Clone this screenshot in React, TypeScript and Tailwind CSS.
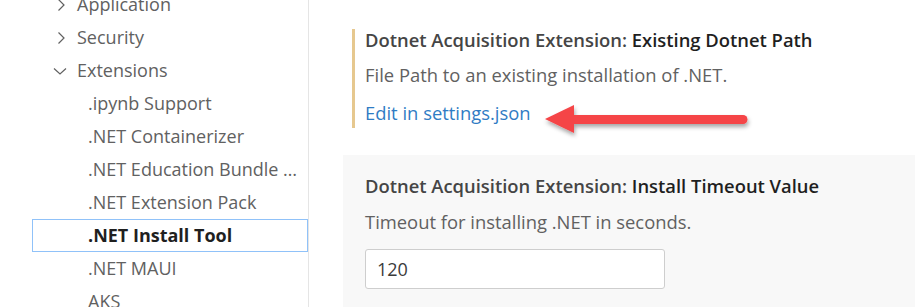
import React from "react";

const font = { fontFamily: '"Open Sans", "Noto Sans", sans-serif' };

function ChevronRight() {
  return (
    <svg width="12" height="14" viewBox="0 0 12 14" className="shrink-0">
      <path d="M3.5 1.5 L9 7 L3.5 12.5" fill="none" stroke="#616161" strokeWidth="1.2" />
    </svg>
  );
}

function ChevronDown() {
  return (
    <svg width="14" height="12" viewBox="0 0 14 12" className="shrink-0">
      <path d="M1 3.5 L7 9 L13 3.5" fill="none" stroke="#616161" strokeWidth="1.2" />
    </svg>
  );
}

type Item = { label: string; kind: "closed" | "open" | "child"; selected?: boolean };

const items: Item[] = [
  { label: "Application", kind: "closed" },
  { label: "Security", kind: "closed" },
  { label: "Extensions", kind: "open" },
  { label: ".ipynb Support", kind: "child" },
  { label: ".NET Containerizer", kind: "child" },
  { label: ".NET Education Bundle SDK Installer", kind: "child" },
  { label: ".NET Extension Pack", kind: "child" },
  { label: ".NET Install Tool", kind: "child", selected: true },
  { label: ".NET MAUI", kind: "child" },
  { label: "AKS", kind: "child" },
];

export default function App() {
  return (
    <div
      className="relative w-[915px] h-[307px] overflow-hidden bg-white flex"
      style={font}
    >
      {/* Sidebar */}
      <div className="w-[309px] h-full shrink-0 border-r border-[#e5e5e5]">
        <div className="-mt-[12px] flex flex-col">
          {items.map((it) => (
            <div
              key={it.label}
              className={
                "ml-[32px] w-[276px] h-[33px] flex items-center border text-[18px] " +
                (it.selected
                  ? "border-[#90c2f9] text-[#1f1f1f] font-bold"
                  : "border-transparent text-[#616161]")
              }
            >
              {it.kind === "child" ? (
                <span className="pl-[55px] pr-[4px] truncate">{it.label}</span>
              ) : (
                <div className="flex items-center">
                  <span className="w-[34px] flex justify-end">
                    {it.kind === "open" ? <ChevronDown /> : <ChevronRight />}
                  </span>
                  <span className="pl-[10px]">{it.label}</span>
                </div>
              )}
            </div>
          ))}
        </div>
      </div>

      {/* Main */}
      <div className="flex-1 flex flex-col">
        <div className="ml-[43px] mt-[29px] border-l-[3px] border-[#e6c88f] pl-[10px] pb-[4px]">
          <div className="text-[18.4px] leading-[22px] font-semibold text-[#454545] whitespace-nowrap">
            Dotnet Acquisition Extension: <span className="text-[#1f1f1f]">Existing Dotnet Path</span>
          </div>
          <div className="mt-[13px] text-[18.4px] leading-[22px] text-[#616161] whitespace-nowrap">
            File Path to an existing installation of .NET.
          </div>
          <div className="mt-[16px] text-[18.4px] leading-[22px] text-[#2f7cc4] whitespace-nowrap">
            Edit in settings.json
          </div>
        </div>

        <div className="ml-[34px] mt-[27px] flex-1 bg-[#f8f8f8] pl-[22px] pt-[20px]">
          <div className="text-[18.4px] leading-[22px] font-semibold text-[#454545] whitespace-nowrap">
            Dotnet Acquisition Extension: <span className="text-[#1f1f1f]">Install Timeout Value</span>
          </div>
          <div className="mt-[14px] text-[18.4px] leading-[22px] text-[#616161] whitespace-nowrap">
            Timeout for installing .NET in seconds.
          </div>
          <div className="mt-[16px] w-[300px] h-[40px] bg-white border border-[#cecece] rounded-[3px] flex items-center pl-[11px] text-[18px] text-[#3b3b3b]">
            120
          </div>
        </div>
      </div>

      {/* Annotation arrow */}
      <svg
        className="absolute left-[535px] top-[95px]"
        width="225"
        height="50"
        viewBox="0 0 225 50"
      >
        <defs>
          <filter id="sh" x="-10%" y="-30%" width="130%" height="180%">
            <feDropShadow dx="1" dy="3" stdDeviation="2" floodColor="#000" floodOpacity="0.35" />
          </filter>
        </defs>
        <g filter="url(#sh)">
          <line x1="36" y1="24.5" x2="208" y2="24.5" stroke="#f54447" strokeWidth="9" strokeLinecap="round" />
          <polygon points="10,24 39,10 39,38" fill="#f54447" />
        </g>
      </svg>
    </div>
  );
}
